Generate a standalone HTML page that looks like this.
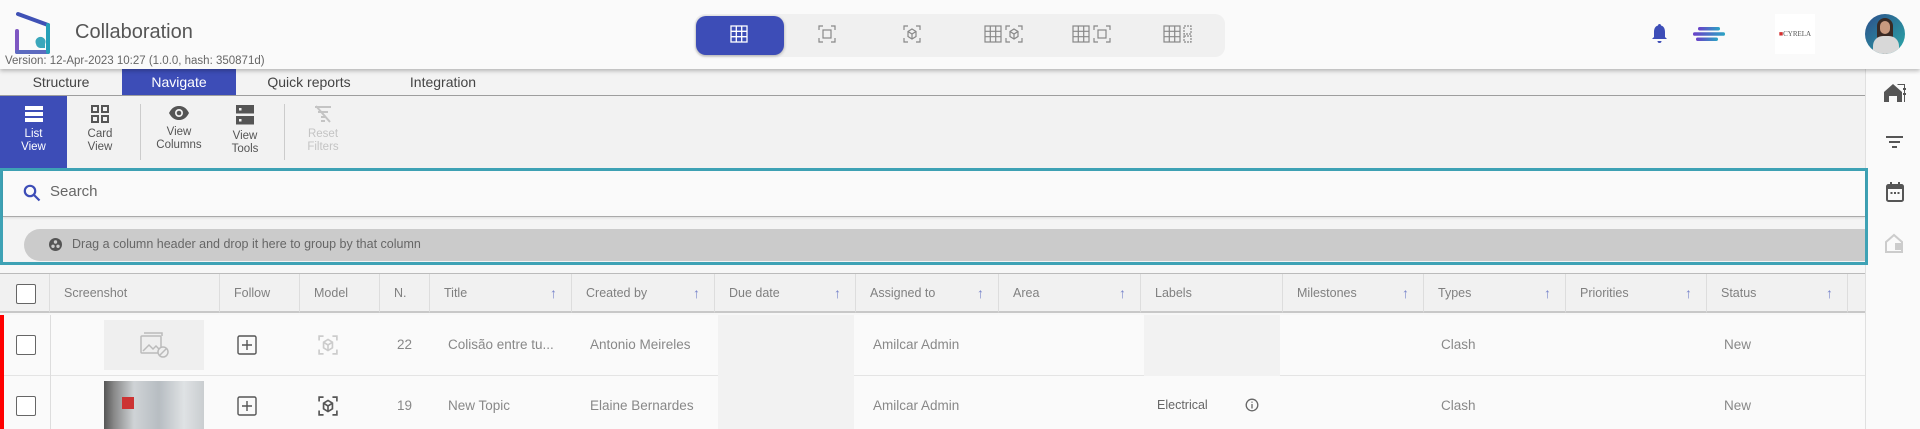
<!DOCTYPE html>
<html><head><meta charset="utf-8"><style>
*{box-sizing:border-box;margin:0;padding:0}
body{width:1920px;height:429px;overflow:hidden;background:#f7f7f7;font-family:"Liberation Sans",sans-serif;color:#757575;position:relative}
.abs{position:absolute}
.hdr{left:0;top:0;width:1920px;height:69px;background:#fafafa;box-shadow:0 2px 4px rgba(0,0,0,.25);z-index:2}
.tabs{left:0;top:69px;width:1865px;height:27px;background:#f3f3f3;border-bottom:1px solid #9e9e9e}
.tab{position:absolute;top:0;height:26px;line-height:26px;font-size:14px;color:#444;text-align:center}
.tb{left:0;top:96px;width:1865px;height:72px;background:#f2f2f2}
.btn{position:absolute;top:0;height:72px;text-align:center;font-size:11.5px;line-height:13px;color:#555}
.btn svg{display:block;margin:9px auto 5px}
.sep{position:absolute;top:8px;width:1px;height:56px;background:#ccc}
.side{left:1865px;top:69px;width:55px;height:360px;background:#fafafa;border-left:1px solid #e0e0e0}
.th{position:absolute;top:274px;height:39px;line-height:38px;font-size:12.5px;color:#808080;padding-left:14px;border-right:1px solid #ddd;background:#f1f1f1;border-bottom:2px solid #c8c8c8}
.arr{position:absolute;right:14px;top:0;color:#7986cb;font-size:14px}
.td{position:absolute;font-size:13.5px;color:#888;padding-left:14px}
.cb{position:absolute;width:20px;height:20px;border:1.5px solid #666;border-radius:2px;background:#fff}
</style></head><body>
<div class="abs hdr">
 <svg class="abs" style="left:10px;top:8px" width="45" height="48" viewBox="0 0 45 48">
  <line x1="8" y1="6" x2="38" y2="17" stroke="#3f51b5" stroke-width="4" stroke-linecap="round"/>
  <line x1="7" y1="23" x2="7" y2="44" stroke="#7e57c2" stroke-width="4" stroke-linecap="round"/>
  <line x1="7" y1="44" x2="38" y2="44" stroke="#5c6bc0" stroke-width="4" stroke-linecap="round"/>
  <line x1="38" y1="17" x2="38" y2="44" stroke="#26a0b8" stroke-width="4" stroke-linecap="round"/>
  <path d="M26 36 a5 5 0 1 1 9 0 l0 4 l-5 0 a5 5 0 0 1 -4 -4z" fill="#3aa7bb"/>
 </svg>
 <div class="abs" style="left:75px;top:21px;font-size:20px;color:#555">Collaboration</div>
 <div class="abs" style="left:5px;top:55px;font-size:11.5px;color:#666">Version: 12-Apr-2023 10:27 (1.0.0, hash: 350871d)</div>
 <div class="abs" style="left:695px;top:14px;width:530px;height:43px;background:#f0f0f0;border-radius:10px"></div>
 <div class="abs" style="left:696px;top:16px;width:88px;height:39px;background:#3d4db7;border-radius:10px;box-shadow:0 1px 3px rgba(0,0,0,.3)"></div>
 <svg class="abs" style="left:730px;top:25px" width="18" height="18" viewBox="0 0 18 18" fill="none" stroke="#fff" stroke-width="1.3"><rect x="1" y="1" width="16" height="16"/><path d="M6.3 1v16M11.7 1v16M1 6.3h16M1 11.7h16"/></svg>
 <svg class="abs" style="left:818px;top:25px" width="18" height="18" viewBox="0 0 18 18" fill="none" stroke="#888" stroke-width="1.2"><path d="M1 5V1h4M13 1h4v4M17 13v4h-4M5 17H1v-4"/><rect x="5" y="5" width="8" height="8"/></svg>
 <svg class="abs" style="left:903px;top:25px" width="18" height="18" viewBox="0 0 18 18" fill="none" stroke="#888" stroke-width="1.2"><path d="M1 5V1h4M13 1h4v4M17 13v4h-4M5 17H1v-4"/><path d="M9 4l4 2.5v5L9 14l-4-2.5v-5zM5 6.5l4 2.5 4-2.5M9 9v5"/></svg>
 <svg class="abs" style="left:984px;top:25px" width="40" height="18" viewBox="0 0 40 18" fill="none" stroke="#888" stroke-width="1.2"><rect x="1" y="1" width="16" height="16"/><path d="M6.3 1v16M11.7 1v16M1 6.3h16M1 11.7h16"/><path d="M22 5V1h4M34 1h4v4M38 13v4h-4M26 17h-4v-4"/><path d="M30 4l4 2.5v5L30 14l-4-2.5v-5zM26 6.5l4 2.5 4-2.5M30 9v5"/></svg>
 <svg class="abs" style="left:1072px;top:25px" width="40" height="18" viewBox="0 0 40 18" fill="none" stroke="#888" stroke-width="1.2"><rect x="1" y="1" width="16" height="16"/><path d="M6.3 1v16M11.7 1v16M1 6.3h16M1 11.7h16"/><path d="M22 5V1h4M34 1h4v4M38 13v4h-4M26 17h-4v-4"/><rect x="26" y="5" width="8" height="8"/></svg>
 <svg class="abs" style="left:1163px;top:25px" width="30" height="18" viewBox="0 0 30 18" fill="none" stroke="#888" stroke-width="1.2"><rect x="1" y="1" width="16" height="16"/><path d="M6.3 1v16M11.7 1v16M1 6.3h16M1 11.7h16"/><path d="M21 1h7v8h-7zM21 11h7v6h-7z" stroke-dasharray="2 1"/></svg>
 <svg class="abs" style="left:1651px;top:23px" width="17" height="21" viewBox="0 0 17 21"><path d="M8.5 1c1 0 1.5.7 1.5 1.5C13 3.3 14 6 14 9v5l2 2H1l2-2V9c0-3 1-5.7 4-6.5C7 1.7 7.5 1 8.5 1z M6.5 18h4a2 2 0 0 1-4 0z" fill="#3d4db7"/></svg>
 <svg class="abs" style="left:1693px;top:26px" width="32" height="16" viewBox="0 0 32 16"><defs><linearGradient id="g" x1="0" x2="1"><stop offset="0" stop-color="#6a3fc8"/><stop offset="1" stop-color="#2aa4c4"/></linearGradient></defs><rect x="5" y="1" width="22" height="3.5" rx="1.7" fill="url(#g)"/><rect x="0" y="6.3" width="32" height="3.5" rx="1.7" fill="url(#g)"/><rect x="3" y="11.5" width="22" height="3.5" rx="1.7" fill="url(#g)"/></svg>
 <div class="abs" style="left:1775px;top:14px;width:40px;height:40px;background:#fff;font-family:'Liberation Serif',serif;font-size:7px;color:#555;line-height:40px;text-align:center"><span style="color:#d32f2f">■</span>CYRELA</div>
 <div class="abs" style="left:1865px;top:14px;width:40px;height:40px;border-radius:50%;background:linear-gradient(135deg,#2c4e8a,#2aa9a8);overflow:hidden"><div style="position:absolute;left:12px;top:4px;width:16px;height:36px;background:#3a2a24;border-radius:8px"></div><div style="position:absolute;left:15px;top:7px;width:10px;height:13px;background:#c99a80;border-radius:5px"></div><div style="position:absolute;left:8px;top:22px;width:26px;height:20px;background:#d8d8d8;border-radius:10px 10px 0 0"></div></div>
</div>
<div class="abs tabs">
 <div class="tab" style="left:0;width:122px">Structure</div>
 <div class="tab" style="left:122px;width:114px;background:#3d4db7;color:#fff">Navigate</div>
 <div class="tab" style="left:250px;width:118px">Quick reports</div>
 <div class="tab" style="left:395px;width:96px">Integration</div>
</div>
<div class="abs tb">
 <div class="btn" style="left:0;width:67px;background:#3d4db7;color:#fff"><svg width="20" height="18" viewBox="0 0 20 18" fill="#fff"><rect x="1" y="1" width="18" height="4"/><rect x="1" y="7" width="18" height="4"/><rect x="1" y="13" width="18" height="4"/></svg>List<br>View</div>
 <div class="btn" style="left:75px;width:50px"><svg width="18" height="18" viewBox="0 0 18 18" fill="none" stroke="#555" stroke-width="2"><rect x="1" y="1" width="6" height="6"/><rect x="11" y="1" width="6" height="6"/><rect x="1" y="11" width="6" height="6"/><rect x="11" y="11" width="6" height="6"/></svg>Card<br>View</div>
 <div class="sep" style="left:140px"></div>
 <div class="btn" style="left:152px;width:54px"><svg width="22" height="16" viewBox="0 0 22 16"><path d="M1 8C4 2 8 1 11 1s7 1 10 7c-3 6-7 7-10 7S4 14 1 8z" fill="#555"/><circle cx="11" cy="8" r="4" fill="#f2f2f2"/><circle cx="11" cy="8" r="2.3" fill="#555"/></svg>View<br>Columns</div>
 <div class="btn" style="left:220px;width:50px"><svg width="18" height="20" viewBox="0 0 18 20"><rect x="0" y="0" width="18" height="8.5" fill="#555"/><rect x="0" y="11" width="18" height="8.5" fill="#555"/><rect x="3" y="3" width="2.5" height="2.5" fill="#f2f2f2"/><rect x="3" y="14" width="2.5" height="2.5" fill="#f2f2f2"/></svg>View<br>Tools</div>
 <div class="sep" style="left:284px"></div>
 <div class="btn" style="left:298px;width:50px;color:#c4c4c4"><svg width="20" height="18" viewBox="0 0 20 18" fill="none" stroke="#c4c4c4" stroke-width="2"><path d="M2 2h16M5 7h10M8 12h4M8 16h4M3 1l14 16"/></svg>Reset<br>Filters</div>
</div>
<div class="abs side">
 <svg class="abs" style="left:18px;top:14px" width="22" height="20" viewBox="0 0 22 20" fill="#555"><path d="M0 9L9 1l9 8v10h-5v-6H5v6H0z"/><path d="M13 1h8v18h-1V2h-6z"/><rect x="19" y="5" width="3" height="2"/><rect x="19" y="10" width="3" height="2"/></svg>
 <svg class="abs" style="left:20px;top:67px" width="17" height="14" viewBox="0 0 17 14" fill="#555"><rect x="0" y="0" width="17" height="2"/><rect x="3" y="5" width="11" height="2"/><rect x="6" y="10" width="5" height="2"/></svg>
 <svg class="abs" style="left:20px;top:113px" width="18" height="20" viewBox="0 0 18 20"><rect x="1" y="3" width="16" height="16" rx="1.5" fill="none" stroke="#555" stroke-width="2"/><rect x="1" y="3" width="16" height="4" fill="#555"/><rect x="4" y="0" width="2" height="4" fill="#555"/><rect x="12" y="0" width="2" height="4" fill="#555"/><rect x="4.5" y="10" width="2" height="2" fill="#555"/><rect x="8" y="10" width="2" height="2" fill="#555"/><rect x="11.5" y="10" width="2" height="2" fill="#555"/></svg>
 <svg class="abs" style="left:19px;top:164px" width="20" height="20" viewBox="0 0 20 20" fill="none" stroke="#ccc" stroke-width="2"><path d="M1 9l8-7 8 7v10H1z"/><rect x="11" y="11" width="6" height="5" fill="#ccc"/></svg>
</div>
<div class="abs" style="left:0;top:168px;width:1868px;height:97px;border:3px solid #3ea2b5;background:#f4f4f4"></div>
<div class="abs" style="left:3px;top:171px;width:1862px;height:46px;background:#fafafa;border-bottom:1px solid #aaa;box-shadow:0 1px 2px rgba(0,0,0,.1)"></div>
<svg class="abs" style="left:23px;top:184px" width="18" height="18" viewBox="0 0 18 18" fill="none" stroke="#3d4db7" stroke-width="2.2"><circle cx="7" cy="7" r="5.2"/><path d="M11 11l5.5 5.5"/></svg>
<div class="abs" style="left:50px;top:183px;font-size:15px;color:#666">Search</div>
<div class="abs" style="left:24px;top:229px;width:1841px;height:32px;background:#cbcbcb;border-radius:16px 0 0 16px"></div>
<svg class="abs" style="left:49px;top:238px" width="13" height="13" viewBox="0 0 13 13"><circle cx="6.5" cy="6.5" r="6.5" fill="#555"/><circle cx="6.5" cy="4" r="1.7" fill="#cbcbcb"/><circle cx="4" cy="8.3" r="1.7" fill="#cbcbcb"/><circle cx="9" cy="8.3" r="1.7" fill="#cbcbcb"/></svg>
<div class="abs" style="left:72px;top:237px;font-size:12.5px;color:#666">Drag a column header and drop it here to group by that column</div>
<div class="abs" style="left:0;top:273px;width:1865px;height:1px;background:#bbb"></div>
<div class="th" style="left:0;width:50px;padding:0"></div>
<div class="cb" style="left:16px;top:284px"></div>
<div class="th" style="left:50px;width:170px">Screenshot</div>
<div class="th" style="left:220px;width:80px">Follow</div>
<div class="th" style="left:300px;width:80px">Model</div>
<div class="th" style="left:380px;width:50px">N.</div>
<div class="th" style="left:430px;width:142px">Title<span class="arr">↑</span></div>
<div class="th" style="left:572px;width:143px">Created by<span class="arr">↑</span></div>
<div class="th" style="left:715px;width:141px">Due date<span class="arr">↑</span></div>
<div class="th" style="left:856px;width:143px">Assigned to<span class="arr">↑</span></div>
<div class="th" style="left:999px;width:142px">Area<span class="arr">↑</span></div>
<div class="th" style="left:1141px;width:142px">Labels</div>
<div class="th" style="left:1283px;width:141px">Milestones<span class="arr">↑</span></div>
<div class="th" style="left:1424px;width:142px">Types<span class="arr">↑</span></div>
<div class="th" style="left:1566px;width:141px">Priorities<span class="arr">↑</span></div>
<div class="th" style="left:1707px;width:141px">Status<span class="arr">↑</span></div>
<div class="th" style="left:1848px;width:17px;border-right:none"></div>
<div class="abs" style="left:0;top:315px;width:1865px;height:61px;background:#fafafa;border-bottom:1px solid #e4e4e4"></div>
<div class="abs" style="left:0;top:376px;width:1865px;height:53px;background:#fafafa"></div>
<div class="abs" style="left:0;top:315px;width:4px;height:114px;background:#f00"></div>
<div class="abs" style="left:50px;top:315px;width:1px;height:114px;background:#ddd"></div>
<div class="abs" style="left:718px;top:315px;width:136px;height:114px;background:#f2f2f2"></div>
<div class="abs" style="left:1144px;top:315px;width:136px;height:61px;background:#f2f2f2"></div>
<div class="cb" style="left:16px;top:335px"></div>
<div class="cb" style="left:16px;top:396px"></div>
<div class="abs" style="left:104px;top:320px;width:100px;height:50px;background:#efefef"></div>
<svg class="abs" style="left:140px;top:332px" width="30" height="26" viewBox="0 0 30 26" fill="none" stroke="#bbb" stroke-width="1.5"><rect x="1" y="4" width="20" height="17" rx="1"/><path d="M4 1h18v3"/><path d="M3 19l6-6 4 4 3-3 5 5"/><circle cx="23" cy="20" r="5" fill="#efefef"/><path d="M20 23l6-6"/></svg>
<div class="abs" style="left:104px;top:381px;width:100px;height:48px;background:linear-gradient(90deg,#555 0,#888 10%,#cfd3d6 30%,#b7bdc2 55%,#dfe2e4 80%,#c9cdd0 100%)"></div>
<div class="abs" style="left:122px;top:397px;width:12px;height:12px;background:#c33"></div>
<svg class="abs" style="left:237px;top:335px" width="20" height="20" viewBox="0 0 20 20" fill="none" stroke="#555" stroke-width="1.4"><rect x="1" y="1" width="18" height="18" rx="1.5"/><path d="M10 5v10M5 10h10"/></svg>
<svg class="abs" style="left:237px;top:396px" width="20" height="20" viewBox="0 0 20 20" fill="none" stroke="#555" stroke-width="1.4"><rect x="1" y="1" width="18" height="18" rx="1.5"/><path d="M10 5v10M5 10h10"/></svg>
<svg class="abs" style="left:318px;top:335px" width="20" height="20" viewBox="0 0 18 18" fill="none" stroke="#ccc" stroke-width="1.5"><path d="M1 5V1h4M13 1h4v4M17 13v4h-4M5 17H1v-4"/><path d="M9 4l4 2.5v5L9 14l-4-2.5v-5zM5 6.5l4 2.5 4-2.5M9 9v5"/></svg>
<svg class="abs" style="left:318px;top:396px" width="20" height="20" viewBox="0 0 18 18" fill="none" stroke="#555" stroke-width="1.5"><path d="M1 5V1h4M13 1h4v4M17 13v4h-4M5 17H1v-4"/><path d="M9 4l4 2.5v5L9 14l-4-2.5v-5zM5 6.5l4 2.5 4-2.5M9 9v5"/></svg>
<div class="td" style="left:383px;top:337px">22</div>
<div class="td" style="left:434px;top:337px">Colisão entre tu...</div>
<div class="td" style="left:576px;top:337px">Antonio Meireles</div>
<div class="td" style="left:859px;top:337px">Amilcar Admin</div>
<div class="td" style="left:1427px;top:337px">Clash</div>
<div class="td" style="left:1710px;top:337px">New</div>
<div class="td" style="left:383px;top:398px">19</div>
<div class="td" style="left:434px;top:398px">New Topic</div>
<div class="td" style="left:576px;top:398px">Elaine Bernardes</div>
<div class="td" style="left:859px;top:398px">Amilcar Admin</div>
<div class="td" style="left:1143px;top:398px;font-size:12.5px;color:#666">Electrical</div>
<svg class="abs" style="left:1245px;top:398px" width="14" height="14" viewBox="0 0 14 14" fill="none" stroke="#666" stroke-width="1.3"><circle cx="7" cy="7" r="5.8"/><path d="M7 6v4.5M7 3.6v1.2"/></svg>
<div class="td" style="left:1427px;top:398px">Clash</div>
<div class="td" style="left:1710px;top:398px">New</div>
</body></html>
